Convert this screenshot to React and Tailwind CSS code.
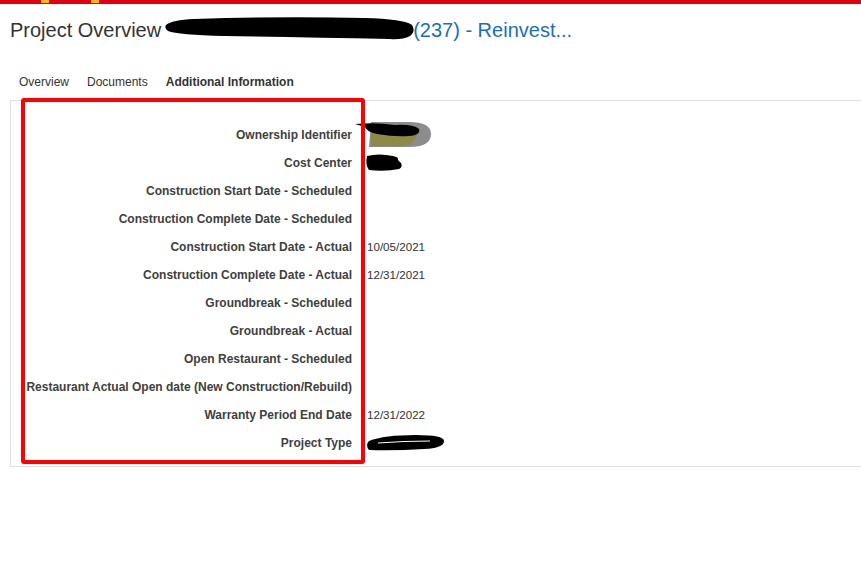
import React from 'react';

const rows = [
  { label: 'Ownership Identifier', redact: 'owner' },
  { label: 'Cost Center', redact: 'cost' },
  { label: 'Construction Start Date - Scheduled' },
  { label: 'Construction Complete Date - Scheduled' },
  { label: 'Construction Start Date - Actual', value: '10/05/2021' },
  { label: 'Construction Complete Date - Actual', value: '12/31/2021' },
  { label: 'Groundbreak - Scheduled' },
  { label: 'Groundbreak - Actual' },
  { label: 'Open Restaurant - Scheduled' },
  { label: 'Restaurant Actual Open date (New Construction/Rebuild)' },
  { label: 'Warranty Period End Date', value: '12/31/2022' },
  { label: 'Project Type', redact: 'type' },
];

const Redaction = ({ kind }) => {
  if (kind === 'owner') {
    return (
      <svg width="80" height="30" viewBox="0 0 80 30" className="absolute left-[-12px] top-[-1px]">
        <path d="M16 2 H54 Q76 2 76 14 Q76 27 54 27 H14 Z" fill="#8c8c8c" />
        <path d="M16 6 H58 Q64 10 60 20 Q56 26 42 26 H16 Z" fill="#8d8a47" />
        <path d="M0 4 Q20 2 40 5 Q58 4 64 9 Q66 15 54 16 Q40 17 22 14 Q12 12 10 7 Z" fill="#000" />
      </svg>
    );
  }
  if (kind === 'cost') {
    return (
      <svg width="40" height="20" viewBox="0 0 40 20" className="absolute left-[-2px] top-[4px]">
        <path d="M2 3 Q14 0 28 3 Q34 4 33 7 L36 10 Q38 14 34 16 Q20 19 4 17 Q0 12 2 3 Z" fill="#000" />
      </svg>
    );
  }
  return (
    <svg width="84" height="20" viewBox="0 0 84 20" className="absolute left-[-3px] top-[4px]">
      <path d="M5 8 Q20 2 52 2 Q80 2 80 8 Q80 15 60 16 Q30 18 5 17 Q1 12 5 8 Z" fill="#000" />
      <path d="M14 10 Q40 8 66 8" fill="none" stroke="#fff" strokeWidth="1" />
    </svg>
  );
};

export default function App() {
  return (
    <div className="min-h-screen overflow-hidden bg-white font-['Liberation_Sans',Arial,sans-serif] text-[#333]">
      <div className="flex h-[4px] bg-[#e2000f]">
        <div className="ml-[41px] h-[3px] w-[8px] bg-[#ffb41f]" />
        <div className="ml-[42px] h-[3px] w-[8px] bg-[#ffb41f]" />
      </div>

      <h1 className="mt-[14px] flex items-center px-[10px] text-[20px] leading-[24px] font-normal">
        <span className="text-[#333]">Project Overview</span>
        <span className="relative ml-[3px] inline-block h-[24px] w-[249px]">
          <svg width="254" height="26" viewBox="0 0 254 26" className="absolute left-0 top-[-3px]">
            <path d="M2 10 Q8 5 30 4 Q120 1 200 3 Q240 4 248 10 Q252 16 246 21 Q238 25 226 24 Q140 22 60 21 Q14 20 4 16 Q0 13 2 10 Z" fill="#000" />
          </svg>
        </span>
        <span className="text-[#1a6fba]">(237) - Reinvest...</span>
      </h1>

      <div className="mt-[32px] flex px-[10px] pb-[10px] text-[12px] leading-[16px]">
        <span className="px-[9px]">Overview</span>
        <span className="px-[9px]">Documents</span>
        <span className="px-[9px] font-bold">Additional Information</span>
      </div>

      <div className="relative ml-[10px] w-[880px] border border-[#dce2e8] pt-[20px] pb-[9px]">
        <div className="flex flex-col">
          {rows.map((r) => (
            <div key={r.label} className="flex h-[28px] items-center">
              <div className="w-[341px] text-right text-[12px] font-bold text-[#404040]">{r.label}</div>
              <div className="relative ml-[15px] flex h-[28px] items-center text-[11.6px] text-[#333]">
                {r.value}
                {r.redact && <Redaction kind={r.redact} />}
              </div>
            </div>
          ))}
        </div>
        <div className="pointer-events-none absolute left-[10px] top-[-3px] h-[366px] w-[344px] rounded-[3px] border-[4.5px] border-[#ff0000]" />
      </div>
    </div>
  );
}
